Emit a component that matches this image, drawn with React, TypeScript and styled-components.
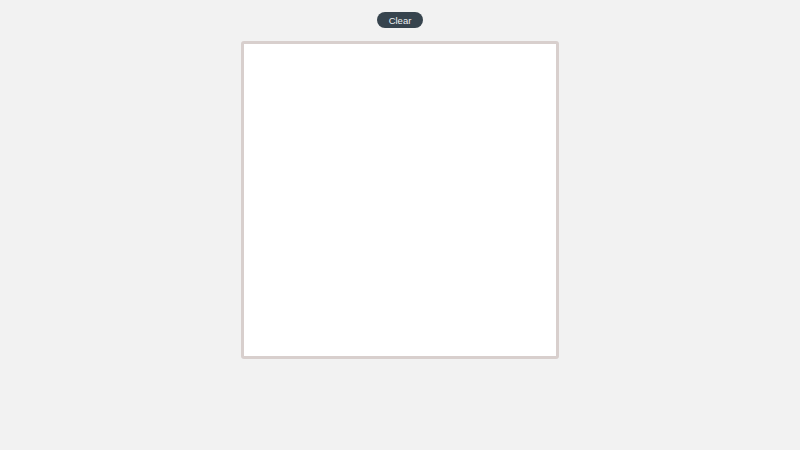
import styled, { createGlobalStyle } from 'styled-components';

const GlobalStyle = createGlobalStyle`
	body {
		margin: 0;
		background: #f2f2f2;
		font-family: 'Liberation Sans', Arial, sans-serif;
	}
`;

export default function App() {
	return (
		<>
			<GlobalStyle />
			<StyledPage>
				<StyledButton type="button">Clear</StyledButton>
				<StyledCanvas width={312} height={312} />
			</StyledPage>
		</>
	);
}

const StyledPage = styled.div`
	display: flex;
	flex-direction: column;
	align-items: center;
	padding-top: 12px;
	gap: 13px;
`;

const StyledButton = styled.button`
	height: 16px;
	width: 46px;
	padding: 1px 0 0;
	border: none;
	border-radius: 8px;
	background-color: #37444e;
	color: #eef0f2;
	font-family: 'Liberation Sans', Arial, sans-serif;
	font-size: 9.5px;
	line-height: 15px;
	cursor: pointer;
`;

const StyledCanvas = styled.canvas`
	display: block;
	background-color: #ffffff;
	border: 3px solid #d8cfcd;
	border-radius: 3px;
`;
